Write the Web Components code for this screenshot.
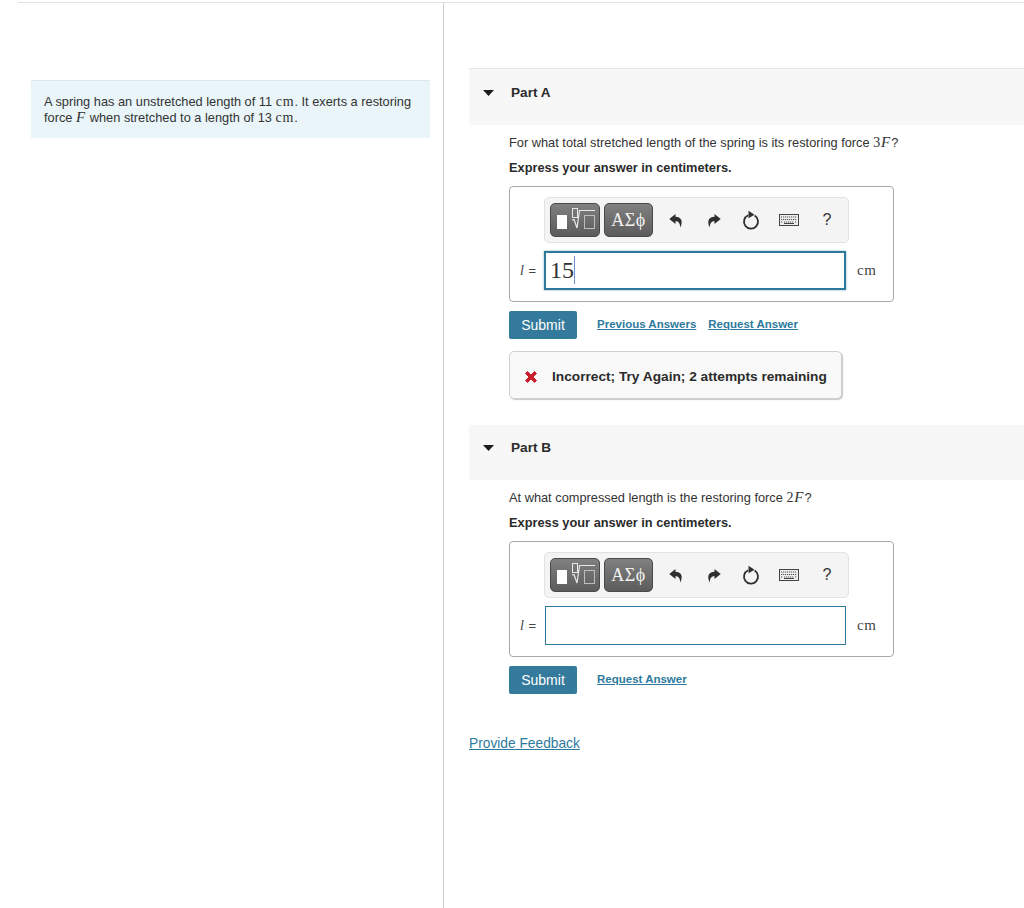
<!DOCTYPE html>
<html lang="en">
<head>
<meta charset="utf-8">
<title>Part A</title>
<style>
  html, body { margin: 0; padding: 0; background: #fff; }
  body { font: 12.8px/16px "Liberation Sans", Arial, sans-serif; color: #333; }
</style>
</head>
<body>
<mp-page>
  <mp-intro slot="intro">A spring has an unstretched length of 11 <mp-math>cm</mp-math>. It exerts a restoring force <mp-math italic>F</mp-math> when stretched to a length of 13 <mp-math>cm</mp-math>.</mp-intro>

  <mp-part title="Part A">
    <mp-question>For what total stretched length of the spring is its restoring force <mp-math>3</mp-math><mp-math italic>F</mp-math>?</mp-question>
    <mp-editor value="15" focused></mp-editor>
    <mp-actions previous></mp-actions>
    <mp-feedback>Incorrect; Try Again; 2 attempts remaining</mp-feedback>
  </mp-part>

  <mp-part title="Part B" short>
    <mp-question>At what compressed length is the restoring force <mp-math>2</mp-math><mp-math italic>F</mp-math>?</mp-question>
    <mp-editor></mp-editor>
    <mp-actions></mp-actions>
  </mp-part>

  <mp-link>Provide Feedback</mp-link>
</mp-page>

<script>
function shadow(el, html) {
  el.attachShadow({ mode: 'open' })
  const template = document.createElement('template')
  template.innerHTML = html
  el.shadowRoot.appendChild(template.content.cloneNode(true))
}

class MpPage extends HTMLElement {
  constructor() {
    super()
    shadow(this, `<style>
      :host { display: block; height: 908px; box-sizing: border-box; overflow: hidden; padding-top: 2px; }
      .frame { margin-left: 18px; height: 906px; border-top: 1px solid #e2e2e2; display: grid; grid-template-columns: 426px 1fr; }
      .left { border-right: 1px solid #d0d0d0; padding: 77px 13px 0 13px; box-sizing: border-box; }
      .right { padding: 65px 0 0 25px; min-width: 0; }
    </style>
    <div class="frame">
      <div class="left"><slot name="intro"></slot></div>
      <div class="right"><slot></slot></div>
    </div>`)
  }
}

class MpIntro extends HTMLElement {
  constructor() {
    super()
    shadow(this, `<style>
      :host { display: block; width: 399px; height: 58px; box-sizing: border-box; background: #e9f5f8; border-top: 1px solid #dfe5e8; padding: 13px 13px 0; color: #333; }
    </style><slot></slot>`)
  }
}

class MpMath extends HTMLElement {
  constructor() {
    super()
    shadow(this, `<style>
      :host { display: inline; font-family: "Liberation Serif", "Times New Roman", serif; font-size: 14px; line-height: 0; letter-spacing: .8px; }
      :host([italic]) { font-style: italic; font-size: 15px; letter-spacing: 1px; }
    </style><slot></slot>`)
  }
}

class MpPart extends HTMLElement {
  constructor() {
    super()
    shadow(this, `<style>
      :host { display: block; margin-bottom: 26px; }
      header { height: 57px; box-sizing: border-box; background: #f7f7f7; border-top: 1px solid #e6e6e6; display: flex; align-items: flex-start; padding: 16px 0 0 14px; font-weight: bold; font-size: 13.6px; color: #2b2b2b; }
      :host([short]) header { height: 55px; border-top-color: #f7f7f7; padding-top: 14px; }
      svg { width: 11px; height: 6px; margin: 5px 17px 0 0; flex: none; }
      .body { padding: 10px 0 0 40px; }
    </style>
    <header>
      <svg viewBox="0 0 11 6"><path d="M0 0H11L5.5 6Z" fill="#1d1d1d"/></svg>
      <span>${this.getAttribute('title')}</span>
    </header>
    <div class="body"><slot></slot></div>`)
  }
}

class MpQuestion extends HTMLElement {
  constructor() {
    super()
    shadow(this, `<style>
      :host { display: block; }
      p { margin: 0; }
      .hint { margin-top: 9px; font-weight: bold; color: #2b2b2b; }
    </style>
    <p><slot></slot></p>
    <p class="hint">Express your answer in centimeters.</p>`)
  }
}

class MpToolbar extends HTMLElement {
  constructor() {
    super()
    shadow(this, `<style>
      :host { display: flex; align-items: center; box-sizing: border-box; width: 305px; height: 46px; background: #f4f4f4; border: 1px solid #e2e2e2; border-radius: 5px; padding-left: 5px; }
      .tpl { display: flex; align-items: center; justify-content: center; box-sizing: border-box; height: 34px; border: 1px solid #4a4a4a; border-radius: 5px; background: linear-gradient(#808080, #5c5c5c); color: #f2f2f2; }
      .a { width: 50px; margin-right: 4px; }
      .b { width: 49px; font: 18px "Liberation Serif", serif; letter-spacing: .5px; }
      .tool { flex: none; width: 37.750px; height: 34px; display: flex; align-items: center; justify-content: center; color: #333; font-size: 16px; }
      .tools { display: flex; margin-left: 4px; }
    </style>
    <div class="tpl a">
      <svg width="48" height="32" viewBox="0 0 48 32">
        <rect x="6" y="11" width="10" height="14" fill="#fff"/>
        <rect x="21.500" y="4.500" width="5" height="9" fill="none" stroke="#e8e8e8"/>
        <path d="M21 16L23 15.500L26 24L28.500 6.500H44" fill="none" stroke="#e8e8e8" stroke-width="1.200"/>
        <rect x="33.500" y="11.500" width="10" height="13" fill="none" stroke="#bdbdbd"/>
      </svg>
    </div>
    <div class="tpl b">ΑΣϕ</div>
    <div class="tools">
      <span class="tool"><svg width="14" height="15" viewBox="0 0 14 15"><path d="M6.500 1L.300 6L6.500 11V8.200C9.500 8.200 11 9.800 11.300 14.500C14 9 13 4 6.500 3.800Z" fill="#2f2f2f"/></svg></span>
      <span class="tool"><svg width="14" height="15" viewBox="0 0 14 15"><path d="M7.500 1L13.700 6L7.500 11V8.200C4.500 8.200 3 9.800 2.700 14.500C0 9 1 4 7.500 3.800Z" fill="#2f2f2f"/></svg></span>
      <span class="tool"><svg width="18" height="20" viewBox="0 0 18 20"><path d="M12.600 5.600A7 7 0 1 1 6.200 5.200" fill="none" stroke="#2f2f2f" stroke-width="1.800"/><path d="M6.500 .8L12.500 4.800L6.500 8.200Z" fill="#2f2f2f"/></svg></span>
      <span class="tool"><svg width="20" height="12" viewBox="0 0 20 12"><rect x=".5" y=".5" width="19" height="11" fill="#eee" stroke="#444"/><path d="M2 3H18M2 5.500H18M2 8H4M5 8H15M16 8H18" stroke="#555" stroke-width="1.200" stroke-dasharray="1.200 .8"/><path d="M5 9.500H15" stroke="#444"/></svg></span>
      <span class="tool">?</span>
    </div>`)
  }
}

class MpEditor extends HTMLElement {
  constructor() {
    super()
    const value = this.getAttribute('value') || ''
    shadow(this, `<style>
      :host { display: block; box-sizing: border-box; width: 385px; height: 116px; margin-top: 10px; border: 1px solid #a9a9a9; border-radius: 4px; padding: 10px 0 0 34px; }
      .row { display: flex; align-items: center; margin-top: 8px; height: 39px; }
      .label { width: 24px; margin-left: -24px; font: 14px "Liberation Serif", serif; color: #444; white-space: nowrap; }
      .label i { margin-right: 1px; }
      .label span { font-family: "Liberation Sans", sans-serif; font-size: 13px; }
      .input { box-sizing: border-box; width: 301px; height: 39px; border: 1px solid #2f7a9c; margin-left: 1px; padding: 4px 0 0 5px; font: 24px/29px "Liberation Serif", serif; color: #333; background: #fff; display: flex; }
      :host([focused]) .input { width: 302px; margin-left: 0; border-width: 2px; padding: 3px 0 0 4px; box-shadow: 0 0 2px rgba(47,122,156,.6); }
      .caret { width: 1px; height: 28px; background: #6f8fd0; }
      .unit { margin-left: 11px; font: 15px "Liberation Serif", serif; letter-spacing: .6px; color: #444; }
    </style>
    <mp-toolbar></mp-toolbar>
    <div class="row">
      <div class="label"><i>l</i> <span>=</span></div>
      <div class="input"><span>${value}</span>${this.hasAttribute('focused') ? '<div class="caret"></div>' : ''}</div>
      <div class="unit">cm</div>
    </div>`)
  }
}

class MpActions extends HTMLElement {
  constructor() {
    super()
    const previous = this.hasAttribute('previous')
    shadow(this, `<style>
      :host { display: flex; align-items: center; margin-top: 9px; height: 28px; }
      .submit { box-sizing: border-box; width: 68px; height: 28px; line-height: 28px; text-align: center; background: #347a9c; color: #fff; font-size: 14px; border-radius: 2px; margin-right: 20px; }
      a { font-weight: bold; font-size: 11.500px; color: #2d7a9c; text-decoration: underline; margin: 0 12px 2px 0; }
    </style>
    <div class="submit">Submit</div>
    ${previous ? '<a>Previous Answers</a>' : ''}
    <a>Request Answer</a>`)
  }
}

class MpFeedback extends HTMLElement {
  constructor() {
    super()
    shadow(this, `<style>
      :host { display: flex; align-items: center; box-sizing: border-box; width: 333px; height: 48px; margin-top: 12px; padding: 3px 0 0 14px; background: #f9f9f9; border: 1px solid #d0d0d0; border-radius: 5px; box-shadow: 1px 1px 1px #c8c8c8; font-weight: bold; font-size: 13.700px; color: #2b2b2b; white-space: nowrap; }
      svg { flex: none; margin-right: 14px; }
    </style>
    <svg width="14" height="14" viewBox="0 0 14 14"><path d="M1.500 3.500L3.500 1.500L7 5L10.500 1.500L12.500 3.500L9 7L12.500 10.500L10.500 12.500L7 9L3.500 12.500L1.500 10.500L5 7Z" fill="#c8202c" stroke="#c8202c" stroke-width="1"/></svg>
    <slot></slot>`)
  }
}

class MpLink extends HTMLElement {
  constructor() {
    super()
    shadow(this, `<style>
      :host { display: block; margin-top: 42px; font-size: 13.750px; color: #2d7a9c; text-decoration: underline; }
    </style><slot></slot>`)
  }
}

customElements.define('mp-page', MpPage)
customElements.define('mp-intro', MpIntro)
customElements.define('mp-math', MpMath)
customElements.define('mp-part', MpPart)
customElements.define('mp-question', MpQuestion)
customElements.define('mp-toolbar', MpToolbar)
customElements.define('mp-editor', MpEditor)
customElements.define('mp-actions', MpActions)
customElements.define('mp-feedback', MpFeedback)
customElements.define('mp-link', MpLink)
</script>
</body>
</html>
